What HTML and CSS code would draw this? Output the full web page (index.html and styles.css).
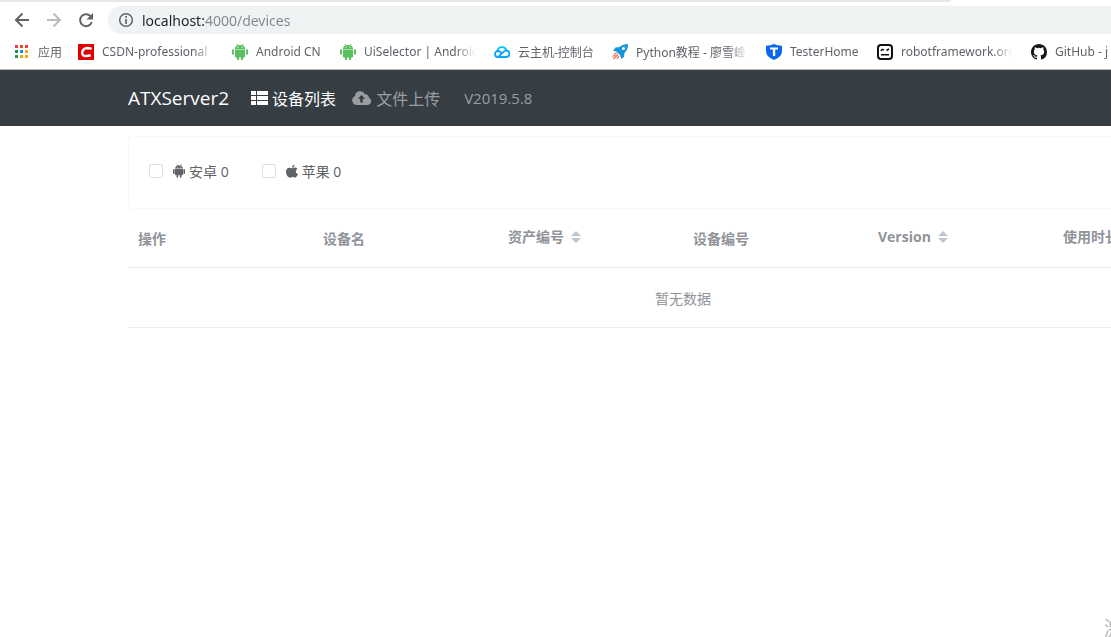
FILE: index.html
```html
<!DOCTYPE html>
<html lang="zh-CN">
<head>
    <meta charset="UTF-8">
    <meta name="viewport" content="width=device-width, initial-scale=1.0">
    <title>ATXServer2</title>
    <link rel="stylesheet" href="styles.css">
</head>
<body>

<svg class="sprite" aria-hidden="true">
    <symbol id="robot" viewBox="0 0 16 16">
        <path fill="#5abf5e" d="M3 5.500h10v7a1 1 0 0 1-1 1h-1V16H9v-2.500H7V16H5v-2.500H4a1 1 0 0 1-1-1zM0 5.500h2v5H0zM14 5.500h2v5h-2z"/>
        <path fill="#5abf5e" d="M3 5c0-1.800 1-2.800 2.300-3.500L4.200.4 5 0l1.200 1.200a6 6 0 0 1 3.600 0L11 0l.8.400-1.100 1.100C12 2.200 13 3.200 13 5z"/>
        <path fill="#fff" d="M5.500 2.700h1v1h-1zM9.500 2.700h1v1h-1z"/>
    </symbol>
</svg>

<header class="browser">
    <div class="tab-strip"></div>
    <div class="toolbar">
        <button class="tool-btn" aria-label="Back">
            <svg width="16" height="16" viewBox="0 0 16 16" fill="none" stroke="#5f6368" stroke-width="2"><path d="M15 8H2M8.500 1.500L2 8l6.500 6.500"/></svg>
        </button>
        <button class="tool-btn" aria-label="Forward">
            <svg width="16" height="16" viewBox="0 0 16 16" fill="none" stroke="#babcbe" stroke-width="2"><path d="M1 8h13M7.500 1.500L14 8l-6.500 6.500"/></svg>
        </button>
        <button class="tool-btn" aria-label="Reload">
            <svg width="16" height="16" viewBox="0 0 16 16"><path d="M13.200 5A6 6 0 1 0 13.800 10" fill="none" stroke="#5f6368" stroke-width="2"/><path fill="#5f6368" d="M15 1v6.500H8.500z"/></svg>
        </button>
        <div class="address">
            <svg width="16" height="16" viewBox="0 0 16 16"><circle cx="8" cy="8" r="6.300" fill="none" stroke="#5f6368" stroke-width="1.500"/><path fill="#5f6368" d="M7.200 4h1.700v1.700H7.200zM7.200 7h1.700v5H7.200z"/></svg>
            <input type="text" class="url" aria-label="Address" value="localhost:4000/devices">
        </div>
    </div>
    <nav class="bookmarks">
        <a href="#" class="bookmark">
            <svg width="16" height="16" viewBox="0 0 16 16"><path fill="#ea4335" d="M1 1h3v3H1zM6 1h3v3H6zM11 1h3v3h-3z"/><path fill="#0f9d58" d="M1 6h3v3H1zM1 11h3v3H1z"/><path fill="#2186f5" d="M6 6h3v3H6z"/><path fill="#f4a70b" d="M11 6h3v3h-3zM6 11h3v3H6zM11 11h3v3h-3z"/></svg>
            <span>应用</span>
        </a>
        <a href="#" class="bookmark">
            <svg width="16" height="16" viewBox="0 0 16 16"><path fill="#df0000" d="M0 0h16v16H0z"/><path fill="none" stroke="#fff" stroke-width="2.400" d="M13.600 5Q12 4 9.500 4 5 4.200 4.200 8.200 3.800 12 8 12q2.700 0 4.700-.9"/></svg>
            <span>CSDN-professional</span>
        </a>
        <a href="#" class="bookmark">
            <svg width="16" height="16"><use href="#robot"/></svg>
            <span>Android CN</span>
        </a>
        <a href="#" class="bookmark">
            <svg width="16" height="16"><use href="#robot"/></svg>
            <span>UiSelector | Android</span>
        </a>
        <a href="#" class="bookmark">
            <svg width="16" height="16" viewBox="0 0 16 16" fill="none" stroke-width="1.800"><path stroke="#00c1f5" d="M3.400 7.300A4.700 4.700 0 0 1 12.500 6.200"/><path stroke="#00a4ff" d="M8 9.500Q6 7 4 7a3 3 0 0 0 0 6h8a3.200 3.200 0 0 0 .5-6.400Q11 6.500 9.800 7.600L4.500 12.700"/></svg>
            <span>云主机-控制台</span>
        </a>
        <a href="#" class="bookmark">
            <svg width="16" height="16" viewBox="0 0 16 16"><path fill="#1499d6" fill-rule="evenodd" d="M16 0c.2 4-1.300 6.800-3.500 8.800L12 13l-3 2-.6-3.500-4-3.900L1 7l2.500-3.500 4-.4C9.700 1 12.500 0 16 0zM11.500 3a1.500 1.500 0 1 0 .01 0z"/><path fill="none" stroke="#f0654a" stroke-width="1.300" d="M5 9l-3 1M6 10.500L1.500 15M7 12l-2 3M3.500 11L.5 12.500"/></svg>
            <span>Python教程 - 廖雪峰</span>
        </a>
        <a href="#" class="bookmark">
            <svg width="16" height="16" viewBox="0 0 16 16"><path fill="#0b68ee" d="M8 0q4 2 8 1.800V7q0 6-8 9-8-3-8-9V1.800Q4 2 8 0z"/><path fill="#fff" d="M4 3.500h8v2H9.200V12H6.900V5.500H4z"/></svg>
            <span>TesterHome</span>
        </a>
        <a href="#" class="bookmark">
            <svg width="16" height="16" viewBox="0 0 16 16" fill="none" stroke="#111"><rect x="1" y="1" width="14" height="14" rx="3" stroke-width="2"/><path stroke-width="1.500" d="M4 7q1-2.500 3-1M9.500 6.500l2.500-1.500M4 10.800h8"/></svg>
            <span>robotframework.org</span>
        </a>
        <a href="#" class="bookmark">
            <svg width="16" height="16" viewBox="0 0 16 16"><path fill="#191717" d="M8 0C3.580 0 0 3.580 0 8c0 3.540 2.290 6.530 5.470 7.590.4.070.55-.17.55-.38 0-.19-.01-.82-.01-1.490-2.010.37-2.530-.49-2.690-.94-.09-.23-.48-.94-.82-1.130-.28-.15-.68-.52-.01-.53.63-.01 1.080.58 1.230.82.72 1.210 1.870.87 2.330.66.07-.52.28-.87.51-1.070-1.780-.2-3.640-.89-3.640-3.950 0-.87.31-1.590.82-2.150-.08-.2-.36-1.020.08-2.120 0 0 .67-.21 2.200.82a7.600 7.600 0 0 1 4 0c1.530-1.040 2.200-.82 2.200-.82.44 1.100.16 1.920.08 2.120.51.56.82 1.270.82 2.150 0 3.070-1.870 3.750-3.650 3.950.29.25.54.73.54 1.480 0 1.070-.01 1.930-.01 2.200 0 .21.150.46.55.38A8 8 0 0 0 16 8c0-4.420-3.580-8-8-8z"/></svg>
            <span>GitHub - j</span>
        </a>
    </nav>
</header>

<nav class="navbar">
    <a href="#" class="brand">ATXServer2</a>
    <a href="#" class="nav-link active">
        <svg width="17" height="14" viewBox="0 0 17 14" fill="currentColor"><path d="M0 0h5v4H0zM6 0h11v4H6zM0 5h5v4H0zM6 5h11v4H6zM0 10h5v4H0zM6 10h11v4H6z"/></svg>
        设备列表
    </a>
    <a href="#" class="nav-link">
        <svg width="20" height="14" viewBox="0 0 20 14" fill="currentColor"><path fill-rule="evenodd" d="M5 14a4.700 4.700 0 0 1-2-9A5.300 5.300 0 0 1 13 3.200a3.200 3.200 0 0 1 3.700 3.300A3.900 3.900 0 0 1 15.800 14zM9.500 4L5.800 7.700h2.400v3.800h2.600V7.700h2.400z"/></svg>
        文件上传
    </a>
    <span class="version">V2019.5.8</span>
</nav>

<main class="container">
    <div class="filters">
        <label class="filter">
            <input type="checkbox" name="platform" value="android">
            <svg width="12" height="14" viewBox="0 0 12 14" fill="currentColor"><path fill-rule="evenodd" d="M2 4.500C2.100 3.200 2.900 2.300 4 1.700L3.300.5l.5-.2.7 1.200a4.500 4.500 0 0 1 3 0L8.200.3l.5.2L8 1.700c1.100.6 1.900 1.500 2 2.800zM4.100 2.800v.7h.7v-.7zM7.200 2.800v.7h.7v-.7z"/><path d="M2 5h8v5.500q0 .8-.8.800h-.7V13q0 .8-.8.800T6.900 13v-1.700H5.100V13q0 .8-.8.800T3.500 13v-1.700h-.7q-.8 0-.8-.8zM0 5.700Q0 5 .8 5t.8.700v3.500q0 .8-.8.800T0 9.200zM10.400 5.700q0-.7.8-.7t.8.700v3.500q0 .8-.8.800t-.8-.8z"/></svg>
            安卓 0
        </label>
        <label class="filter">
            <input type="checkbox" name="platform" value="apple">
            <svg width="12" height="14" viewBox="0 0 12 14" fill="currentColor"><path d="M8.600.5C8.700 2 7.600 3.600 6 3.700 5.900 2.200 7.100.8 8.600.5zM6.200 4.300c.6 0 1.400-.7 2.600-.7 1 0 2 .5 2.600 1.400-2.300 1.400-1.900 4.300.6 5.100-.5 1.500-1.700 3.600-3 3.600-.9 0-1.300-.6-2.400-.6s-1.500.6-2.400.6C2.300 13.700 0 10.700 0 7.700c0-2.600 1.600-4 3.300-4 1.200 0 2.100.6 2.900.6z"/></svg>
            苹果 0
        </label>
    </div>

    <table class="devices">
        <thead>
            <tr>
                <th>操作</th>
                <th>设备名</th>
                <th class="sortable">资产编号<svg width="10" height="12" viewBox="0 0 10 12" fill="#c0c4cc"><path d="M5 0l5 5H0zM0 7h10l-5 5z"/></svg></th>
                <th>设备编号</th>
                <th class="sortable">Version<svg width="10" height="12" viewBox="0 0 10 12" fill="#c0c4cc"><path d="M5 0l5 5H0zM0 7h10l-5 5z"/></svg></th>
                <th class="sortable">使用时长</th>
            </tr>
        </thead>
        <tbody>
            <tr>
                <td colspan="6">暂无数据</td>
            </tr>
        </tbody>
    </table>
</main>

<div class="watermark">激</div>

</body>
</html>
```
FILE: styles.css
```css
body {
    font-family: "Open Sans", "Noto Sans CJK SC", sans-serif;
    margin: 0;
    overflow: hidden;
    color: #606266;
    background-color: #fff;
}
a {
    color: inherit;
    text-decoration: none;
}
svg {
    flex: none;
}
.sprite {
    display: none;
}

/* browser bar */
.browser {
    border-bottom: 1px solid #b6b6b6;
}
.tab-strip {
    height: 2px;
    margin-right: 160px;
    background-color: #e4e8ec;
    border-bottom-right-radius: 4px;
}
.toolbar {
    display: flex;
    gap: 16px;
    align-items: center;
    padding: 4px 0 0 14px;
}
.tool-btn {
    display: flex;
    padding: 0;
    border: none;
    background: none;
}
.address {
    flex: 1;
    display: flex;
    align-items: center;
    gap: 8px;
    height: 28px;
    margin-left: -2px;
    padding-left: 10px;
    border-radius: 14px 0 0 14px;
    background-color: #eff3f4;
}
.url {
    flex: 1;
    padding: 0;
    border: none;
    outline: none;
    font-family: "Noto Sans", sans-serif;
    font-size: 14px;
    /* host dark, path grey */
    color: transparent;
    background: linear-gradient(to right, #202124 63px, #80868b 63px);
    -webkit-background-clip: text;
    background-clip: text;
}
.bookmarks {
    display: grid;
    grid-template-columns: 64px 154px 108px 154px 118px 154px 111px 154px 154px;
    align-items: center;
    height: 35px;
    padding-left: 14px;
    font-family: "Noto Sans", "Noto Sans CJK SC", sans-serif;
    font-size: 12px;
    color: #5f6368;
}
.bookmark {
    display: flex;
    align-items: center;
    gap: 8px;
}
.bookmark span {
    max-width: 112px;
    overflow: hidden;
    white-space: nowrap;
    -webkit-mask-image: linear-gradient(to right, #000 92px, transparent 112px);
    mask-image: linear-gradient(to right, #000 92px, transparent 112px);
}

/* site navbar */
.navbar {
    display: flex;
    align-items: center;
    height: 56px;
    padding-left: 128px;
    background-color: #363d43;
    color: #9a9ea1;
    font-size: 16px;
}
.brand {
    margin-right: 22px;
    color: #fff;
    font-size: 19px;
}
.nav-link {
    display: flex;
    align-items: center;
    gap: 4px;
    margin-right: 16px;
}
.nav-link.active {
    color: #fff;
}
.version {
    margin-left: 8px;
    font-size: 15px;
}

/* device list */
.container {
    width: 1110px;
    margin: 10px 0 0 128px;
}
.filters {
    display: flex;
    gap: 33px;
    padding: 20px 20px 24px;
    border: 1px solid #f7f8fa;
    border-radius: 4px;
}
.filter {
    display: flex;
    align-items: center;
    gap: 4px;
    height: 27px;
    font-size: 14px;
}
.filter input {
    appearance: none;
    width: 14px;
    height: 14px;
    margin: 0 6px 0 0;
    border: 1px solid #dcdfe6;
    border-radius: 2px;
    background-color: #fff;
}
.devices {
    width: 100%;
    table-layout: fixed;
    border-collapse: collapse;
    color: #909399;
    font-size: 14px;
}
.devices th {
    height: 58px;
    padding: 0 10px;
    border-bottom: 1px solid #ebeef5;
    text-align: left;
    font-size: 14px;
    font-weight: bold;
}
.devices th.sortable {
    height: 54px;
    padding-bottom: 4px;
}
.sortable svg {
    margin-left: 7px;
    vertical-align: -1px;
}
.devices td {
    height: 59px;
    padding: 0;
    border-bottom: 1px solid #ebeef5;
    text-align: center;
}

.watermark {
    position: fixed;
    top: 615px;
    left: 1104px;
    color: #b4b4b4;
    font-size: 20px;
    line-height: 28px;
    white-space: nowrap;
}
```
